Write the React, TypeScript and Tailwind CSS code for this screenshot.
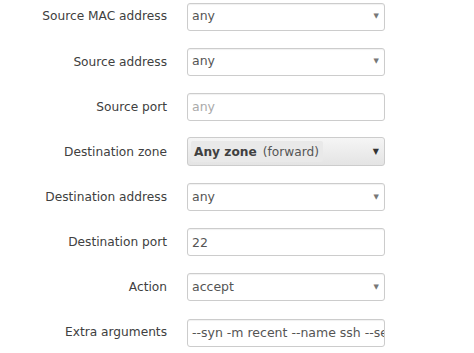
import React from 'react'

type Row = {
  label: string
  kind: 'select' | 'text' | 'zone'
  value: string
  placeholder?: boolean
}

const rows: Row[] = [
  { label: 'Source MAC address', kind: 'select', value: 'any' },
  { label: 'Source address', kind: 'select', value: 'any' },
  { label: 'Source port', kind: 'text', value: 'any', placeholder: true },
  { label: 'Destination zone', kind: 'zone', value: 'Any zone' },
  { label: 'Destination address', kind: 'select', value: 'any' },
  { label: 'Destination port', kind: 'text', value: '22' },
  { label: 'Action', kind: 'select', value: 'accept' },
  { label: 'Extra arguments', kind: 'text', value: '--syn -m recent --name ssh --set' },
]

function Field({ row }: { row: Row }) {
  if (row.kind === 'zone') {
    return (
      <div className="flex h-[29px] w-[198px] items-center rounded-[3px] border border-[#ccc] bg-gradient-to-b from-[#f5f5f5] to-[#e4e4e4] pl-[3px]">
        <span className="flex h-[21px] items-center rounded-[2px] bg-[#e9e9e9] pr-[4px] pl-[3px] text-[12.2px] text-[#404040]">
          <b className="font-bold">{row.value}</b>
          <span className="ml-[6px] text-[#555]">(forward)</span>
        </span>
        <span className="ml-auto pr-[5px] text-[8px] text-[#333]">▼</span>
      </div>
    )
  }
  if (row.kind === 'text') {
    return (
      <input
        readOnly
        value={row.placeholder ? '' : row.value}
        placeholder={row.placeholder ? row.value : undefined}
        className="h-[28px] w-[198px] rounded-[3px] border border-[#ccc] bg-white pl-[4px] text-[12.5px] text-[#555] shadow-[inset_0_1px_1px_rgba(0,0,0,0.06)] outline-none placeholder:text-[#aaa]"
        style={{ fontFamily: '"DejaVu Sans", sans-serif' }}
      />
    )
  }
  return (
    <div className="flex h-[28px] w-[198px] items-center rounded-[3px] border border-[#ccc] bg-white pl-[4px] shadow-[inset_0_1px_1px_rgba(0,0,0,0.06)]">
      <span className="whitespace-nowrap text-[12.5px] text-[#555]">{row.value}</span>
      <span className="ml-auto pr-[5px] text-[7px] text-[#777]">▼</span>
    </div>
  )
}

export default function App() {
  return (
    <div
      className="h-[353px] w-[474px] overflow-hidden bg-white"
      style={{ fontFamily: '"DejaVu Sans", sans-serif' }}
    >
      <div className="-mt-[6px] flex flex-col">
        {rows.map((row) => (
          <div key={row.label} className="flex h-[45.15px] items-center gap-[20px]">
            <div className="w-[167px] text-right text-[12.2px] text-[#404040]">{row.label}</div>
            <Field row={row} />
          </div>
        ))}
      </div>
    </div>
  )
}
